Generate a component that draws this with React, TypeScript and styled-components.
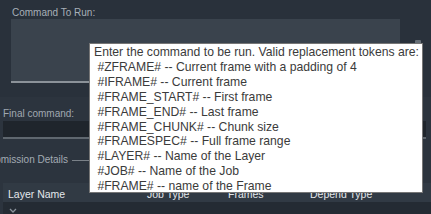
import styled, {createGlobalStyle} from 'styled-components';

const GlobalStyle = createGlobalStyle`
  html, body {
    margin: 0;
    padding: 0;
    background: #29313b;
  }
`;

const tokens = [
    'Enter the command to be run. Valid replacement tokens are:',
    ' #ZFRAME# -- Current frame with a padding of 4',
    ' #IFRAME# -- Current frame',
    ' #FRAME_START# -- First frame',
    ' #FRAME_END# -- Last frame',
    ' #FRAME_CHUNK# -- Chunk size',
    ' #FRAMESPEC# -- Full frame range',
    ' #LAYER# -- Name of the Layer',
    ' #JOB# -- Name of the Job',
    ' #FRAME# -- name of the Frame',
];

const columns = [
    {name: 'Layer Name', width: 134},
    {name: 'Job Type', width: 76},
    {name: 'Frames', width: 77},
    {name: 'Depend Type', width: 120},
];

export default function App() {
    return (
        <>
            <GlobalStyle/>
            <Page>
                <TopPanel>
                    <Label>Command To Run:</Label>
                    <EditorRow>
                        <CommandArea/>
                        <SideKnob/>
                    </EditorRow>
                </TopPanel>
                <LowerPanel>
                    <FieldLabel>Final command:</FieldLabel>
                    <FinalInput/>
                    <Group>
                        <GroupTitle>Submission Details</GroupTitle>
                        <GroupLine/>
                    </Group>
                    <Table>
                        <HeaderRow>
                            {columns.map(c => (
                                <HeaderCell key={c.name} $width={c.width}>{c.name}</HeaderCell>
                            ))}
                        </HeaderRow>
                        <BodyRow>
                            <svg width="8" height="6" viewBox="0 0 8 6">
                                <polyline points="1,1 4,4 7,1" fill="none" stroke="#8a939c" strokeWidth="1.3"/>
                            </svg>
                        </BodyRow>
                    </Table>
                </LowerPanel>
                <Tooltip>
                    {tokens.map(t => <TipLine key={t}>{t}</TipLine>)}
                </Tooltip>
            </Page>
        </>
    );
}

const Page = styled.div`
  position: relative;
  width: 431px;
  height: 214px;
  overflow: hidden;
  display: flex;
  flex-direction: column;
  font-family: "Liberation Sans", Arial, sans-serif;
  font-size: 10px;
`;

const TopPanel = styled.div`
  flex-shrink: 0;
  height: 97px;
  box-sizing: border-box;
  padding: 7px 0 0 11px;
  background: #29313b;
`;

const Label = styled.div`
  color: #a7afb8;
  line-height: 12px;
  padding-left: 1px;
`;

const EditorRow = styled.div`
  display: flex;
  align-items: flex-start;
  gap: 15px;
`;

const CommandArea = styled.div`
  width: 389px;
  height: 64px;
  box-sizing: border-box;
  background: #3a434d;
  border-bottom: 2px solid #8b9299;
`;

const SideKnob = styled.div`
  margin-top: 21px;
  width: 6px;
  height: 5px;
  border-radius: 1px;
  background: #666e76;
`;

const LowerPanel = styled.div`
  flex: 1;
  min-height: 0;
  overflow: hidden;
  display: flex;
  flex-direction: column;
  padding: 11px 0 0 3px;
  background: #2c343e;
`;

const FieldLabel = styled.div`
  flex-shrink: 0;
  color: #a0a8b1;
  line-height: 12px;
`;

const FinalInput = styled.div`
  flex-shrink: 0;
  margin-top: 1px;
  width: 423px;
  height: 18px;
  box-sizing: border-box;
  background: #1f252c;
  border-bottom: 2px solid #5f676f;
`;

const Group = styled.div`
  flex-shrink: 0;
  margin-top: 15px;
  display: flex;
  align-items: center;
  gap: 4px;
  margin-left: -20px;
  width: 434px;
`;

const GroupTitle = styled.div`
  color: #a3abb4;
  line-height: 12px;
  white-space: nowrap;
`;

const GroupLine = styled.div`
  flex: 1;
  height: 1px;
  margin-top: 1px;
  background: #7a8188;
  margin-right: 19px;
`;

const Table = styled.div`
  flex-shrink: 0;
  margin-top: 17px;
  display: flex;
  flex-direction: column;
`;

const HeaderRow = styled.div`
  display: flex;
  height: 19px;
  box-sizing: border-box;
  padding-top: 3px;
  align-items: center;
  background: #313a44;
`;

const HeaderCell = styled.div<{ $width: number }>`
  width: ${({$width}) => $width}px;
  padding-left: 5px;
  color: #e4e8ec;
  font-size: 10.5px;
  white-space: nowrap;
`;

const BodyRow = styled.div`
  height: 12px;
  padding: 3px 0 0 6px;
  background: #242b33;
`;

const Tooltip = styled.div`
  position: absolute;
  left: 89px;
  top: 43px;
  width: 334px;
  height: 150px;
  box-sizing: border-box;
  padding: 1px 4px 0 4px;
  background: #ffffff;
  border: 1px solid #767676;
  color: #3b3b3b;
  font-size: 12.2px;
  line-height: 14.9px;
`;

const TipLine = styled.div`
  white-space: pre;
`;
